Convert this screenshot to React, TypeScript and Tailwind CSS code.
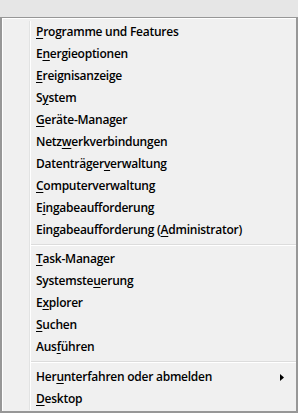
import React from "react";

type Item = { pre: string; key: string; post: string; arrow?: boolean };

const group1: Item[] = [
  { pre: "", key: "P", post: "rogramme und Features" },
  { pre: "E", key: "n", post: "ergieoptionen" },
  { pre: "", key: "E", post: "reignisanzeige" },
  { pre: "S", key: "y", post: "stem" },
  { pre: "", key: "G", post: "eräte-Manager" },
  { pre: "Netz", key: "w", post: "erkverbindungen" },
  { pre: "Datenträger", key: "v", post: "erwaltung" },
  { pre: "", key: "C", post: "omputerverwaltung" },
  { pre: "E", key: "i", post: "ngabeaufforderung" },
  { pre: "Eingabeaufforderung (", key: "A", post: "dministrator)" },
];
const group2: Item[] = [
  { pre: "", key: "T", post: "ask-Manager" },
  { pre: "Systemste", key: "u", post: "erung" },
  { pre: "E", key: "x", post: "plorer" },
  { pre: "", key: "S", post: "uchen" },
  { pre: "Aus", key: "f", post: "ühren" },
];
const group3: Item[] = [
  { pre: "Her", key: "u", post: "nterfahren oder abmelden", arrow: true },
  { pre: "", key: "D", post: "esktop" },
];

function Row({ item }: { item: Item }) {
  return (
    <div className="h-[22px] flex items-center pl-[5px] pr-[12px] text-[#000]">
      <span className="flex-1 whitespace-nowrap">
        {item.pre}
        <span className="underline underline-offset-[2px] decoration-1">{item.key}</span>
        {item.post}
      </span>
      {item.arrow && (
        <svg width="4" height="7" viewBox="0 0 4 7">
          <path d="M0 0 L4 3.5 L0 7 Z" fill="#000" />
        </svg>
      )}
    </div>
  );
}

function Sep() {
  return (
    <div className="h-[7px] flex flex-col justify-center">
      <div className="h-[1px] bg-[#dcdcdc]" />
      <div className="h-[1px] bg-[#ffffff]" />
    </div>
  );
}

export default function App() {
  return (
    <div
      className="w-[298px] h-[413px] bg-[#e6e6e6] pt-[17px] text-[12px] font-semibold tracking-[-0.25px]"
      style={{ fontFamily: '"Open Sans", "Noto Sans", sans-serif' }}
    >
      <div className="h-[396px] border-t border-l-2 border-r-2 border-b-2 border-[#979797] bg-[#f0f0f0]">
        <div className="h-full border-t border-l border-white flex pt-[2px] pb-[1px]">
          <div className="w-[27px] shrink-0 border-r border-[#e2e3e3]" />
          <div className="flex-1 flex flex-col border-l border-white">
            {group1.map((it, i) => (
              <Row key={"a" + i} item={it} />
            ))}
            <Sep />
            {group2.map((it, i) => (
              <Row key={"b" + i} item={it} />
            ))}
            <div className="h-[8px] flex flex-col justify-center">
              <div className="h-[1px] bg-[#dcdcdc]" />
              <div className="h-[1px] bg-[#ffffff]" />
            </div>
            {group3.map((it, i) => (
              <Row key={"c" + i} item={it} />
            ))}
          </div>
        </div>
      </div>
    </div>
  );
}
